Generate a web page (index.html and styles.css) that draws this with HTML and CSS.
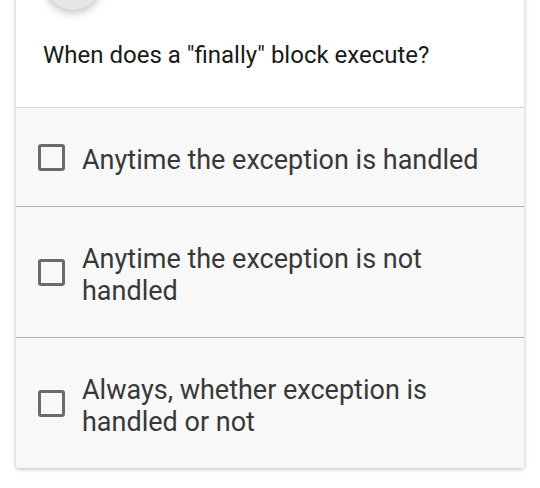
FILE: index.html
```html
<!DOCTYPE html>
<html>
<head>
<meta charset="utf-8">
<link rel="stylesheet" href="styles.css">
</head>
<body>
<div class="card">
  <div class="header">
    <div class="avatar"></div>
    <div class="question">When does a "finally" block execute?</div>
  </div>
  <div class="option">
    <span class="box"></span>
    <span class="label">Anytime the exception is handled</span>
  </div>
  <div class="option">
    <span class="box"></span>
    <span class="label">Anytime the exception is not handled</span>
  </div>
  <div class="option">
    <span class="box"></span>
    <span class="label">Always, whether exception is handled or not</span>
  </div>
</div>
</body>
</html>
```

FILE: styles.css
```css
html {
  overflow: hidden;
  background: #ffffff;
}
body {
  margin: 0;
  padding: 0 0 20px 0;
  background: #ffffff;
  font-family: Roboto, "Noto Sans", sans-serif;
}
.card {
  margin: -60px 16px 0 16px;
  width: 508px;
  background: #f8f8f8;
  box-shadow: 0 1px 4px rgba(0,0,0,0.28);
  border-radius: 2px;
}
.header {
  background: #ffffff;
  padding: 14px 26px 0 27px;
  height: 168px;
  box-sizing: border-box;
  border-bottom: 1px solid #d8d8d8;
}
.avatar {
  width: 56px;
  height: 56px;
  border-radius: 50%;
  margin-left: 2px;
  background: #e6e6e6;
  box-shadow: 0 3px 8px rgba(0,0,0,0.25);
}
.question {
  margin-top: 31px;
  font-size: 24px;
  line-height: 28px;
  color: #1a1a1a;
}
.option {
  display: flex;
  align-items: center;
  padding: 33px 40px 33px 22px;
  border-bottom: 1px solid #b0b0b0;
}
.option:last-child {
  border-bottom: none;
}
.box {
  flex: none;
  width: 21px;
  height: 21px;
  border: 3px solid #6b6b6b;
  border-radius: 3px;
  margin-right: 17px;
}
.label {
  font-size: 27px;
  line-height: 32px;
  padding-top: 3px;
  margin-bottom: -3px;
  color: #383838;
}
```
